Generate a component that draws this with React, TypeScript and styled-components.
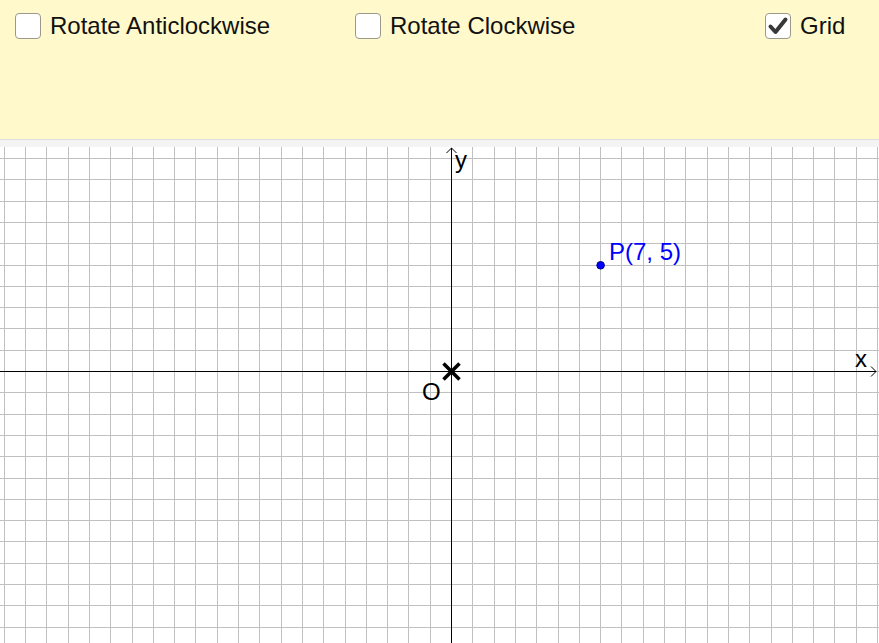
import React, { useState } from 'react';
import styled, { createGlobalStyle } from 'styled-components';

const GlobalStyle = createGlobalStyle`
  html, body {
    margin: 0;
    padding: 0;
    background: #ffffff;
    font-family: 'Liberation Sans', Arial, sans-serif;
  }
`;

const UNIT = 21.3;
const WIDTH = 879;
const HEIGHT = 496;
const OX = 451;
const OY = 224;
const LABEL_FONT = "'Liberation Sans', Arial, sans-serif";

const Page = styled.div`
  display: flex;
  flex-direction: column;
  width: 879px;
  height: 643px;
  overflow: hidden;
`;

const Panel = styled.div`
  height: 139px;
  background: #fff9cc;
  border-bottom: 1px solid #dedede;
  box-sizing: content-box;
`;

const Options = styled.div`
  display: grid;
  grid-template-columns: 340px 410px auto;
  padding: 12px 0 0 15px;
`;

const Option = styled.label`
  display: flex;
  align-items: center;
  gap: 9px;
  cursor: pointer;
  font-size: 24px;
  color: #111111;
  line-height: 26px;
  user-select: none;
`;

const Caption = styled.span`
  padding-top: 1px;
`;

const Box = styled.span<{ $checked: boolean }>`
  display: flex;
  align-items: center;
  justify-content: center;
  width: 26px;
  height: 26px;
  box-sizing: border-box;
  border: 1.5px solid #9b9a8a;
  border-radius: 4px;
  background: #ffffff;
`;

const Band = styled.div`
  height: 7px;
  background: #f4f4f4;
`;

const Graph = styled.div`
  flex: 1;
  background: #ffffff;
`;

const Plot = styled.svg`
  display: block;
`;

type CheckProps = { label: string; checked: boolean; onToggle: () => void };

const Check = ({ label, checked, onToggle }: CheckProps) => (
  <Option onClick={onToggle}>
    <Box $checked={checked}>
      {checked && (
        <svg width="22" height="22" viewBox="0 0 22 22">
          <path d="M3.5 11.5 L8.5 17 L18.5 4.5" fill="none" stroke="#383838" strokeWidth="4" strokeLinecap="round" strokeLinejoin="round" />
        </svg>
      )}
    </Box>
    <Caption>{label}</Caption>
  </Option>
);

const App = () => {
  const [anti, setAnti] = useState(false);
  const [clock, setClock] = useState(false);
  const [grid, setGrid] = useState(true);

  const vLines: number[] = [];
  for (let k = -22; k <= 22; k++) {
    const x = Math.round(OX + k * UNIT) + 0.5;
    if (x >= 0 && x <= WIDTH) vLines.push(x);
  }
  const hLines: number[] = [];
  for (let k = -12; k <= 14; k++) {
    const y = Math.round(OY + k * UNIT) + 0.5;
    if (y >= 0 && y <= HEIGHT) hLines.push(y);
  }

  const px = OX + 7 * UNIT + 0.5;
  const py = OY - 5 * UNIT + 0.8;

  return (
    <>
      <GlobalStyle />
      <Page>
        <Panel>
          <Options>
            <Check label="Rotate Anticlockwise" checked={anti} onToggle={() => setAnti((p) => !p)} />
            <Check label="Rotate Clockwise" checked={clock} onToggle={() => setClock((p) => !p)} />
            <Check label="Grid" checked={grid} onToggle={() => setGrid((p) => !p)} />
          </Options>
        </Panel>
        <Band />
        <Graph>
          <Plot width={WIDTH} height={HEIGHT}>
            {grid && (
              <g stroke="#c0c0c0" strokeWidth="1">
                {vLines.map((x) => (
                  <line key={'v' + x} x1={x} y1={0} x2={x} y2={HEIGHT} />
                ))}
                {hLines.map((y) => (
                  <line key={'h' + y} x1={0} y1={y} x2={WIDTH} y2={y} />
                ))}
              </g>
            )}
            {/* axes */}
            <g stroke="#000000" strokeWidth="1" fill="none">
              <line x1={0} y1={OY + 0.5} x2={876} y2={OY + 0.5} />
              <polyline points={`871,${OY - 4.5} 876,${OY + 0.5} 871,${OY + 5.5}`} />
              <line x1={OX + 0.5} y1={1} x2={OX + 0.5} y2={HEIGHT} />
              <polyline points={`${OX - 4.5},6 ${OX + 0.5},1 ${OX + 5.5},6`} />
            </g>
            <text x={455} y={21} fontSize="24" fontFamily={LABEL_FONT} fill="#000">y</text>
            <text x={855} y={220} fontSize="24" fontFamily={LABEL_FONT} fill="#000">x</text>
            {/* origin */}
            <g stroke="#000000" strokeWidth="3.5">
              <line x1={OX - 7.5} y1={OY - 7.5} x2={OX + 8.5} y2={OY + 8.5} />
              <line x1={OX - 7.5} y1={OY + 8.5} x2={OX + 8.5} y2={OY - 7.5} />
            </g>
            <text x={422} y={253} fontSize="24" fontFamily={LABEL_FONT} fill="#000">O</text>
            {/* point P */}
            <circle cx={px} cy={py} r={3.8} fill="#0000ff" stroke="#00007a" strokeWidth="1" />
            <text x={609} y={113} fontSize="24" fontFamily={LABEL_FONT} fill="#0000ff">P(7, 5)</text>
          </Plot>
        </Graph>
      </Page>
    </>
  );
};

export default App;
